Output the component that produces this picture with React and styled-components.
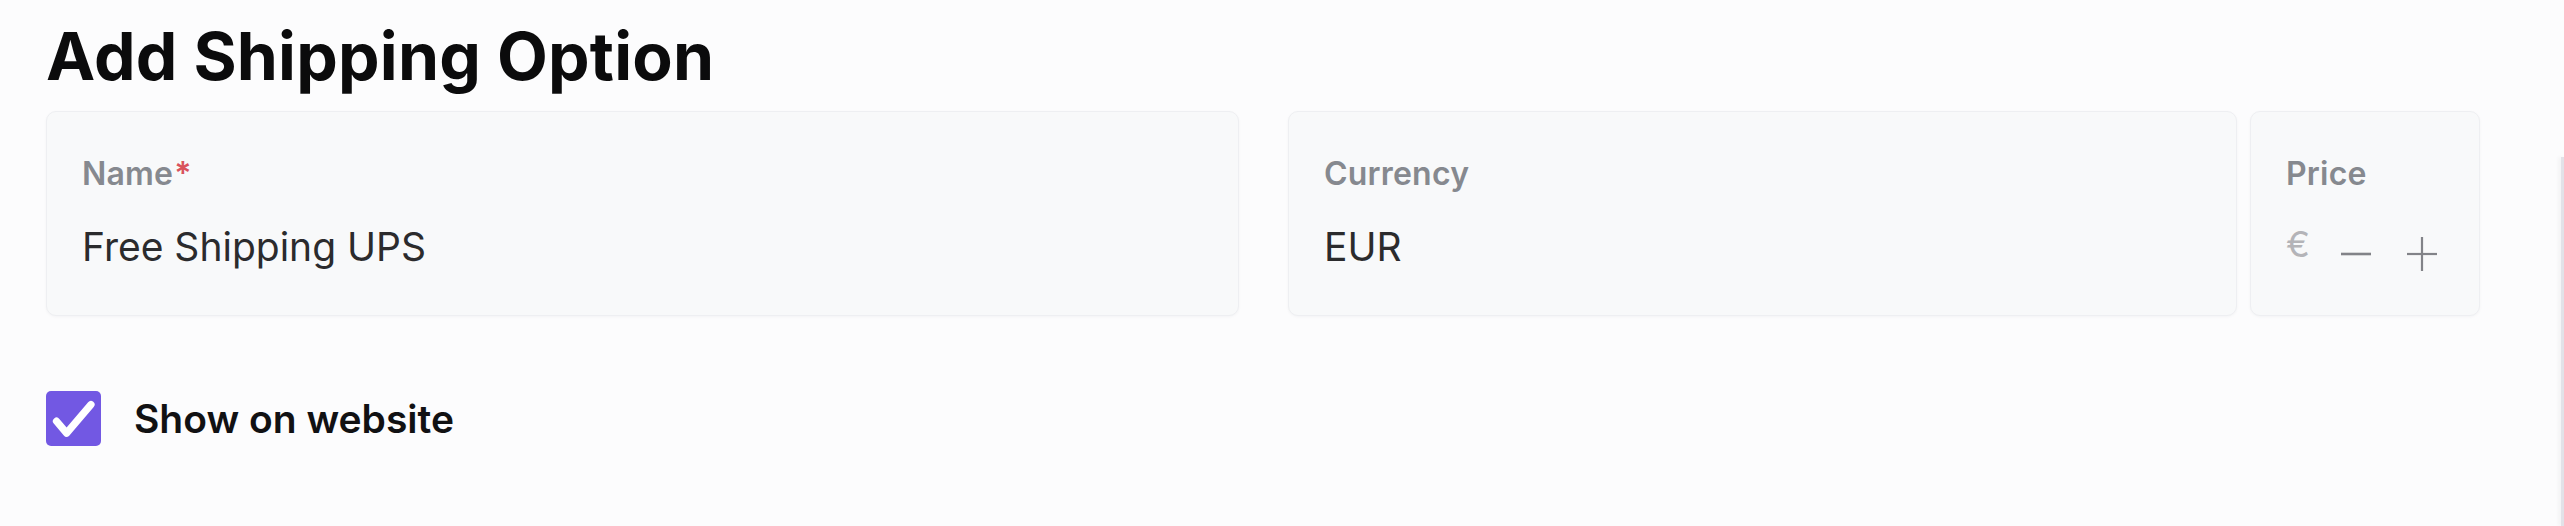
import React, { useState } from "react";
import styled, { createGlobalStyle } from "styled-components";

const GlobalStyle = createGlobalStyle`
    html, body {
        margin: 0;
        padding: 0;
        background: #fcfcfd;
        font-family: Inter, "Noto Sans", "Liberation Sans", sans-serif;
    }
`;

const ShippingOptionForm = () => {
    const [visible, setVisible] = useState(true);

    return (
        <Page>
            <Main>
                <Title>Add Shipping Option</Title>
                <FieldRow>
                    <Card width="1193px">
                        <Label>
                            Name<Required>*</Required>
                        </Label>
                        <Value>Free Shipping UPS</Value>
                    </Card>
                    <PriceGroup>
                        <Card width="949px">
                            <Label>Currency</Label>
                            <Value>EUR</Value>
                        </Card>
                        <Card width="230px">
                            <Label>Price</Label>
                            <Stepper>
                                <Euro>€</Euro>
                                <StepButton aria-label="decrease">
                                    <svg width="32" height="6" viewBox="0 0 32 6">
                                        <line x1="1" y1="3" x2="31" y2="3" stroke="currentColor" strokeWidth="2.6" />
                                    </svg>
                                </StepButton>
                                <StepButton aria-label="increase">
                                    <svg width="32" height="36" viewBox="0 0 32 36">
                                        <line x1="1" y1="18" x2="31" y2="18" stroke="currentColor" strokeWidth="2.2" />
                                        <line x1="16" y1="1" x2="16" y2="35" stroke="currentColor" strokeWidth="2.2" />
                                    </svg>
                                </StepButton>
                            </Stepper>
                        </Card>
                    </PriceGroup>
                </FieldRow>
                <CheckRow onClick={() => setVisible(!visible)}>
                    <CheckBox checked={visible}>
                        {visible && (
                            <svg width="55" height="55" viewBox="0 0 24 24">
                                <path
                                    d="M4.6 13.2 L9 18.4 L19.6 5.9"
                                    fill="none"
                                    stroke="#fff"
                                    strokeWidth="3.2"
                                    strokeLinecap="round"
                                    strokeLinejoin="round"
                                />
                            </svg>
                        )}
                    </CheckBox>
                    <CheckLabel>Show on website</CheckLabel>
                </CheckRow>
            </Main>
            <SideEdge />
        </Page>
    );
};

const Page = styled.div`
    display: flex;
    width: 2564px;
    height: 526px;
    overflow: hidden;
`;

const Main = styled.div`
    flex: 1;
    padding: 16px 0 0 46px;
`;

const Title = styled.h1`
    margin: 0 0 15px;
    font-size: 66px;
    line-height: 80px;
    font-weight: 700;
    letter-spacing: 0.2px;
    color: #0b0b0c;
`;

const FieldRow = styled.div`
    display: flex;
    gap: 49px;
`;

const PriceGroup = styled.div`
    display: flex;
    gap: 13px;
`;

const Card = styled.div`
    box-sizing: border-box;
    width: ${(props) => props.width};
    height: 205px;
    padding: 43px 35px 0;
    display: flex;
    flex-direction: column;
    gap: 31px;
    background: #f8f9fa;
    border: 1.5px solid #eeeff2;
    border-radius: 10px;
    box-shadow: 0 1px 3px rgba(20, 20, 40, 0.04);
`;

const Label = styled.div`
    font-size: 32px;
    line-height: 38px;
    font-weight: 600;
    letter-spacing: 0.2px;
    color: #86898f;
`;

const Required = styled.span`
    margin-left: 1px;
    color: #d9535d;
`;

const Value = styled.div`
    font-size: 39px;
    line-height: 46px;
    font-weight: 400;
    letter-spacing: 0;
    color: #2b2b2d;
`;

const Stepper = styled.div`
    display: flex;
    align-items: center;
    height: 46px;
`;

const Euro = styled.span`
    font-size: 36px;
    line-height: 46px;
    color: #b4b4b8;
    margin-right: 30px;
    transform: translateY(-3px);
`;

const StepButton = styled.button`
    display: flex;
    align-items: center;
    justify-content: center;
    padding: 0;
    margin-right: 34px;
    border: none;
    background: none;
    color: #828388;
    transform: translateY(7px);
`;

const CheckRow = styled.label`
    display: flex;
    align-items: center;
    gap: 33px;
    margin-top: 75px;
    cursor: pointer;
`;

const CheckBox = styled.span`
    width: 55px;
    height: 55px;
    display: flex;
    align-items: center;
    justify-content: center;
    border-radius: 5px;
    background: ${(props) => (props.checked ? "#7258e3" : "#fff")};
    border: ${(props) => (props.checked ? "none" : "2px solid #c9c9d2")};
    box-sizing: border-box;
`;

const CheckLabel = styled.span`
    font-size: 39px;
    line-height: 46px;
    font-weight: 600;
    color: #111113;
`;

const SideEdge = styled.div`
    width: 3px;
    margin-top: 157px;
    background: #e2e2e8;
    box-shadow: -2px 0 4px rgba(20, 20, 40, 0.06);
`;

export default function App() {
    return (
        <>
            <GlobalStyle />
            <ShippingOptionForm />
        </>
    );
}
